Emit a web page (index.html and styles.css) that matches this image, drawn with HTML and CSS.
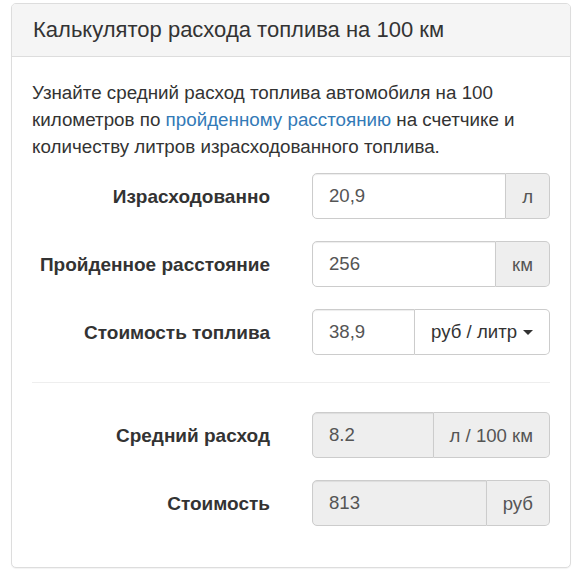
FILE: index.html
```html
<!DOCTYPE html>
<html lang="ru">
<head>
<meta charset="utf-8">
<title>Калькулятор расхода топлива</title>
<link rel="stylesheet" href="styles.css">
</head>
<body>
<div class="panel">
  <div class="panel-heading">
    <h3 class="panel-title">Калькулятор расхода топлива на 100 км</h3>
  </div>
  <div class="panel-body">
    <p class="intro">Узнайте средний расход топлива автомобиля на 100 километров по <a href="#">пройденному расстоянию</a> на счетчике и количеству литров израсходованного топлива.</p>
    <form class="form">
      <div class="form-group">
        <label class="label">Израсходованно</label>
        <div class="input-group">
          <input class="control" type="text" value="20,9">
          <span class="addon">л</span>
        </div>
      </div>
      <div class="form-group">
        <label class="label">Пройденное расстояние</label>
        <div class="input-group">
          <input class="control" type="text" value="256">
          <span class="addon">км</span>
        </div>
      </div>
      <div class="form-group">
        <label class="label">Стоимость топлива</label>
        <div class="input-group">
          <input class="control" type="text" value="38,9">
          <button class="dropdown" type="button">руб / литр <span class="caret"></span></button>
        </div>
      </div>
      <hr class="divider">
      <div class="form-group">
        <label class="label">Средний расход</label>
        <div class="input-group">
          <input class="control readonly" type="text" value="8.2" readonly>
          <span class="addon">л / 100 км</span>
        </div>
      </div>
      <div class="form-group">
        <label class="label">Стоимость</label>
        <div class="input-group">
          <input class="control readonly" type="text" value="813" readonly>
          <span class="addon">руб</span>
        </div>
      </div>
    </form>
  </div>
</div>
</body>
</html>
```
FILE: styles.css
```css
* { box-sizing: border-box; }
html, body { background: #fff; }
body {
  margin: 0;
  padding: 3px 11px;
  font-family: "Liberation Sans", Arial, sans-serif;
  font-size: 18.2px;
  line-height: 27px;
  color: #333;
}
.panel {
  width: 560px;
  border: 1px solid #ddd;
  border-radius: 5px;
  box-shadow: 0 1px 1px rgba(0,0,0,0.05);
  background: #fff;
}
.panel-heading {
  height: 53px;
  padding: 13px 21px;
  background: #f5f5f5;
  border-bottom: 1px solid #ddd;
  border-radius: 4px 4px 0 0;
}
.panel-title {
  margin: 0;
  font-size: 22px;
  line-height: 26px;
  font-weight: 400;
  color: #333;
}
.panel-body {
  padding: 22px 20px 19px;
}
.intro {
  margin: 0 0 13px;
  font-size: 18.8px;
}
.intro a {
  color: #337ab7;
  text-decoration: none;
}
.form-group {
  display: grid;
  grid-template-columns: 1fr 1fr;
  column-gap: 42px;
  align-items: center;
  margin-bottom: 22px;
}
.label {
  text-align: right;
  font-weight: 700;
  font-size: 19px;
}
.input-group {
  display: flex;
  height: 46px;
}
.control {
  flex: 1 1 auto;
  min-width: 0;
  width: 100%;
  height: 46px;
  margin: 0;
  padding: 8px 16px;
  font-family: inherit;
  font-size: 18.6px;
  color: #555;
  background: #fff;
  border: 1px solid #ccc;
  border-radius: 5px 0 0 5px;
  box-shadow: inset 0 1px 1px rgba(0,0,0,0.075);
  outline: none;
}
.control.readonly {
  background: #eee;
}
.addon {
  flex: none;
  display: flex;
  align-items: center;
  padding: 0 16px;
  font-size: 18.6px;
  color: #555;
  background: #eee;
  border: 1px solid #ccc;
  border-left: 0;
  border-radius: 0 5px 5px 0;
  white-space: nowrap;
}
.dropdown {
  flex: none;
  display: flex;
  align-items: center;
  height: 46px;
  margin: 0;
  padding: 0 16px;
  font-family: inherit;
  font-size: 18.6px;
  color: #333;
  background: #fff;
  border: 1px solid #ccc;
  border-left: 0;
  border-radius: 0 5px 5px 0;
  white-space: nowrap;
}
.caret {
  display: inline-block;
  width: 0;
  height: 0;
  margin-left: 6px;
  border-top: 5px solid #333;
  border-left: 5px solid transparent;
  border-right: 5px solid transparent;
}
.divider {
  margin: 27px 0 29px;
  border: 0;
  border-top: 1px solid #eee;
}
```
